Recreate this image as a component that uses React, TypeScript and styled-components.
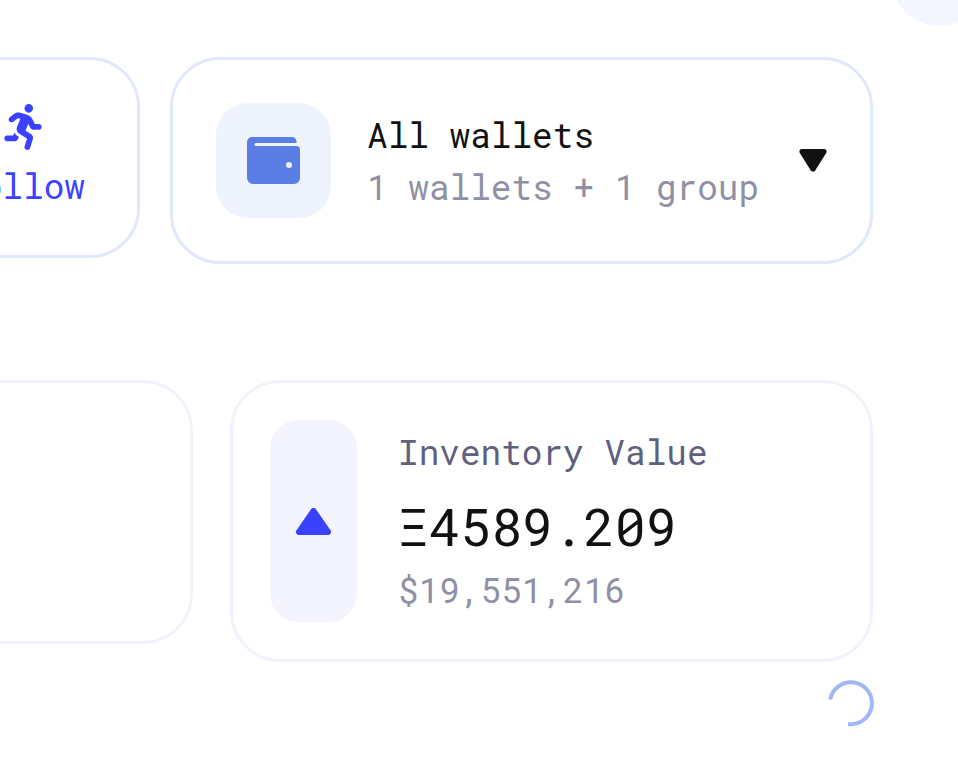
import styled, { createGlobalStyle } from "styled-components";
import { FaRunning } from "react-icons/fa";

const GlobalStyle = createGlobalStyle`
  html, body {
    margin: 0;
    padding: 0;
    background: #fff;
  }
`;

function WalletIcon() {
  return (
    <svg width="54" height="48" viewBox="0 0 54 48" fill="#5b7ee5">
      <path d="M5 0H45a4.5 4.5 0 0 1 4.5 4.5V6H9a1.5 1.5 0 0 0 0 3H49a4 4 0 0 1 4 4V41a6 6 0 0 1-6 6H6a6 6 0 0 1-6-6V5a5 5 0 0 1 5-5Z" />
      <circle cx="42" cy="28" r="3" fill="#eff3fd" />
    </svg>
  );
}

function CaretDown() {
  return (
    <svg width="28" height="23" viewBox="0 0 28 23" fill="#111">
      <path d="M3 0H25a2.6 2.6 0 0 1 2.2 4L16.2 21.4a2.6 2.6 0 0 1-4.4 0L.8 4A2.6 2.6 0 0 1 3 0Z" />
    </svg>
  );
}

function CaretUp() {
  return (
    <svg width="35" height="27" viewBox="0 0 35 27" fill="#3a41ff">
      <path d="M15 1.2a3 3 0 0 1 5 0L34.3 22a3 3 0 0 1-2.5 5H3.2a3 3 0 0 1-2.5-5Z" />
    </svg>
  );
}

function Spinner() {
  return (
    <svg width="48" height="48" viewBox="0 0 48 48" fill="none">
      <path
        d="M3.2 20.5A21 21 0 1 1 21 45"
        stroke="#a0b6f6"
        strokeWidth="4"
      />
    </svg>
  );
}

export default function App() {
  return (
    <>
      <GlobalStyle />
      <Page>
        <CornerArc />
        <TopRow>
          <FollowCard>
            <FaRunning size={46} />
            <FollowLabel>Follow</FollowLabel>
          </FollowCard>
          <WalletCard>
            <WalletBadge>
              <WalletIcon />
            </WalletBadge>
            <WalletText>
              <WalletTitle>All wallets</WalletTitle>
              <WalletSub>1 wallets + 1 group</WalletSub>
            </WalletText>
            <CaretDown />
          </WalletCard>
        </TopRow>
        <StatsRow>
          <EmptyStat />
          <StatCard>
            <TrendPanel>
              <CaretUp />
            </TrendPanel>
            <StatText>
              <StatLabel>Inventory Value</StatLabel>
              <StatValue>Ξ4589.209</StatValue>
              <StatFiat>$19,551,216</StatFiat>
            </StatText>
          </StatCard>
        </StatsRow>
        <SpinnerRow>
          <Spinner />
        </SpinnerRow>
      </Page>
    </>
  );
}

const Page = styled.div`
  position: relative;
  width: 958px;
  height: 765px;
  overflow: hidden;
  box-sizing: border-box;
  padding: 57px 85px 0 0;
  background: #fff;
  font-family: "Roboto Mono", "DejaVu Sans Mono", "Liberation Mono", monospace;
`;

const CornerArc = styled.div`
  position: absolute;
  top: -74px;
  right: -32px;
  width: 100px;
  height: 100px;
  border-radius: 50%;
  background: #f3f6fe;
`;

const TopRow = styled.div`
  display: flex;
  justify-content: flex-end;
  align-items: flex-start;
  gap: 30px;
`;

const FollowCard = styled.div`
  flex: none;
  width: 234px;
  height: 201px;
  box-sizing: border-box;
  display: flex;
  flex-direction: column;
  align-items: center;
  padding-top: 44px;
  gap: 16px;
  border: 3px solid #e2e8fb;
  border-radius: 50px;
  color: #3a41ff;
`;

const FollowLabel = styled.div`
  font-size: 34.4px;
  line-height: 40px;
`;

const WalletCard = styled.div`
  flex: none;
  width: 703px;
  height: 207px;
  box-sizing: border-box;
  display: flex;
  align-items: center;
  padding: 0 43px;
  border: 3px solid #e2e8fb;
  border-radius: 50px;
`;

const WalletBadge = styled.div`
  flex: none;
  width: 115px;
  height: 115px;
  display: flex;
  align-items: center;
  justify-content: center;
  border-radius: 32px;
  background: #eff3fd;
`;

const WalletText = styled.div`
  flex: 1;
  margin-left: 36px;
  font-size: 34.4px;
  line-height: 52px;
`;

const WalletTitle = styled.div`
  color: #111;
`;

const WalletSub = styled.div`
  color: #8f90a5;
`;

const StatsRow = styled.div`
  display: flex;
  justify-content: flex-end;
  align-items: flex-start;
  gap: 37px;
  margin-top: 116px;
`;

const EmptyStat = styled.div`
  flex: none;
  width: 400px;
  height: 264px;
  box-sizing: border-box;
  border: 3px solid #f0f3fb;
  border-radius: 50px;
`;

const StatCard = styled.div`
  flex: none;
  width: 643px;
  height: 282px;
  box-sizing: border-box;
  display: flex;
  padding: 37px;
  border: 3px solid #f0f3fb;
  border-radius: 50px;
`;

const TrendPanel = styled.div`
  flex: none;
  width: 87px;
  height: 202px;
  display: flex;
  align-items: center;
  justify-content: center;
  border-radius: 28px;
  background: #f3f4fe;
`;

const StatText = styled.div`
  margin-left: 41px;
`;

const StatLabel = styled.div`
  margin-top: 8px;
  font-size: 34.4px;
  line-height: 48px;
  color: #5f5f7e;
`;

const StatValue = styled.div`
  margin-top: 18px;
  font-size: 51.6px;
  line-height: 64px;
  color: #111;
`;

const StatFiat = styled.div`
  margin-top: 8px;
  font-size: 34.4px;
  line-height: 48px;
  color: #8f90a5;
`;

const SpinnerRow = styled.div`
  display: flex;
  justify-content: flex-end;
  margin-top: 17px;
  margin-right: -2px;
`;
